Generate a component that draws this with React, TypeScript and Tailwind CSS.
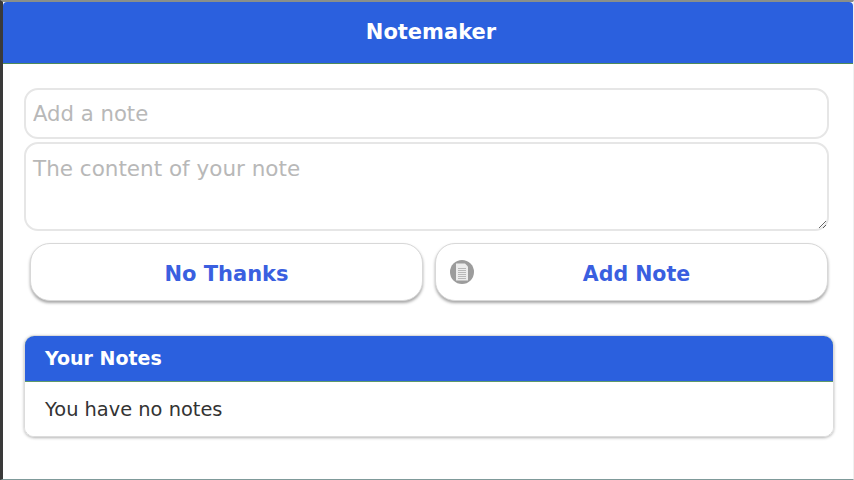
import { useState } from "react";

const font = "font-['DejaVu_Sans',sans-serif]";

function NoteIcon() {
  return (
    <svg width="24" height="24" viewBox="0 0 24 24" aria-hidden="true">
      <circle cx="12" cy="12" r="12" fill="#9c9c9c" />
      <path d="M6 3.5h9l3 3V20.5H6z" fill="#ececec" />
      <path d="M8 8.5h8M8 10.5h8M8 12.5h8M8 14.5h8M8 16.5h8M8 18.5h8" stroke="#b8b8b8" strokeWidth="1" />
    </svg>
  );
}

export default function App() {
  const [title, setTitle] = useState("");
  const [content, setContent] = useState("");

  return (
    <div className={`${font} h-[480px] w-[854px] overflow-hidden bg-white border-l-[3px] border-t-[2px] border-b border-r border-l-[#3a3a3a] border-t-[#8a8f8a] border-b-[#7f9a9a] border-r-[#f0f0f0]`}>
      {/* Header */}
      <div className="flex h-[62px] items-center justify-center rounded-t-[4px] border-b border-[#4f8a5a] bg-[#2b60de] pl-[6px] pt-[1px] text-[21px] font-bold text-white">
        Notemaker
      </div>

      {/* Form */}
      <div className="flex w-[806px] flex-col pl-[21px] pt-[24px]">
        <input
          value={title}
          onChange={(e) => setTitle(e.target.value)}
          placeholder="Add a note"
          className="h-[51px] w-[805px] rounded-[14px] border-2 border-[#e6e6e6] bg-white px-[7px] text-[21.2px] text-[#333] outline-none placeholder:text-[#b8b8b8]"
        />
        <textarea
          value={content}
          onChange={(e) => setContent(e.target.value)}
          placeholder="The content of your note"
          className="mt-[3px] block h-[89px] w-[805px] rounded-[14px] border-2 border-[#e6e6e6] bg-white px-[7px] pb-[9px] pt-[10px] text-[21.5px] leading-[30px] text-[#333] outline-none placeholder:text-[#b8b8b8]"
        />
        <div className="mt-[12px] flex w-[805px] gap-[12px] pl-[6px]">
          <button className="flex h-[58px] w-[393px] items-center justify-center rounded-[20px] border border-[#d8d8d8] bg-white pt-[5px] text-[21px] font-bold text-[#3a5fe0] shadow-[0_2px_3px_rgba(0,0,0,0.35)]">
            No Thanks
          </button>
          <button className="relative flex h-[58px] w-[393px] items-center justify-center rounded-[20px] border border-[#d8d8d8] bg-white pl-[10px] pt-[5px] text-[20.5px] font-bold text-[#3a5fe0] shadow-[0_2px_3px_rgba(0,0,0,0.35)]">
            <span className="absolute left-[14px] top-[16px] flex">
              <NoteIcon />
            </span>
            Add Note
          </button>
        </div>
      </div>

      {/* Notes list */}
      <div className="ml-[21px] mt-[34px] w-[810px] overflow-hidden rounded-[10px] border border-[#dcdcdc] shadow-[0_1px_3px_rgba(0,0,0,0.3)]">
        <div className="-mx-px -mt-px flex h-[47px] items-center rounded-t-[10px] border border-[#5f9a6a] bg-[#2b60de] px-[20px] text-[19px] font-bold text-white">
          Your Notes
        </div>
        <div className="flex h-[54px] items-center bg-white px-[20px] pt-[2px] text-[19.4px] text-[#333]">
          You have no notes
        </div>
      </div>
    </div>
  );
}
